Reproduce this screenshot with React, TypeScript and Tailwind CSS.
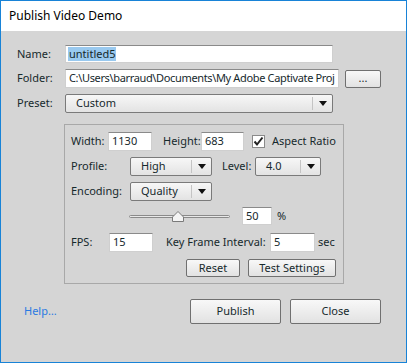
import React from 'react';

const font = { fontFamily: '"Noto Sans", "Liberation Sans", sans-serif' };

function Field({ w, h = 19, value, children }: { w: string; h?: number; value?: string; children?: React.ReactNode }) {
  return (
    <div
      className={`${w} ${h === 18 ? 'h-[18px]' : 'h-[19px]'} bg-white border border-[#cfcfcf] border-t-[#8a8a8a] flex items-center pl-[3px] text-[11px] text-[#16292c] overflow-hidden whitespace-nowrap`}
    >
      {children ?? value}
    </div>
  );
}

function Select({ w, value }: { w: string; value: string }) {
  return (
    <div
      className={`${w} h-[19px] rounded-[2px] border border-[#7a7a7a] bg-gradient-to-b from-[#f7f7f7] to-[#e3e3e3] flex items-center text-[11px] text-[#16292c]`}
    >
      <span className="flex-1 pl-[10px]">{value}</span>
      <span className="w-px h-[13px] bg-[#c4c4c4]" />
      <span className="w-[19px] flex justify-center">
        <svg width="8" height="5" viewBox="0 0 8 5">
          <path d="M0 0H8L4 5Z" fill="#111" />
        </svg>
      </span>
    </div>
  );
}

function Btn({ w, h, label }: { w: string; h: string; label: string }) {
  return (
    <div
      className={`${w} ${h} rounded-[2px] border border-[#707070] bg-gradient-to-b from-[#f8f8f8] to-[#e2e2e2] flex items-center justify-center text-[11px] text-[#16292c]`}
    >
      {label}
    </div>
  );
}

export default function App() {
  return (
    <div
      className="w-[407px] h-[363px] border border-[#1883d7] bg-[#d5d5d5] flex flex-col text-[#16292c]"
      style={font}
    >
      {/* title bar */}
      <div className="h-[30px] bg-white flex items-center pl-[8px] text-[12px] text-black">
        Publish Video Demo
      </div>

      <div className="pl-[16px] flex flex-col text-[11px] whitespace-nowrap">
        <div className="mt-[14px] flex items-center h-[18px]">
          <span className="w-[48px]">Name:</span>
          <Field w="w-[268px]" h={18}>
            <span className="bg-[#99c9ef] px-px -ml-px leading-[14px]">untitled5</span>
          </Field>
        </div>
        <div className="mt-[6px] flex items-center h-[19px]">
          <span className="w-[48px]">Folder:</span>
          <Field w="w-[274px]">
            <span className="tracking-[-0.35px]">C:\Users\barraud\Documents\My Adobe Captivate Proj</span>
          </Field>
          <div className="ml-[6px]">
            <Btn w="w-[36px]" h="h-[18px]" label="..." />
          </div>
        </div>
        <div className="mt-[6px] flex items-center h-[19px]">
          <span className="w-[48px]">Preset:</span>
          <Select w="w-[268px]" value="Custom" />
        </div>

        {/* settings box */}
        <div className="mt-[11px] ml-[47px] w-[280px] h-[160px] border border-[#a8a8a8] pl-[6px] pt-[7px] flex flex-col">
          <div className="flex items-center h-[19px]">
            <span className="w-[37px]">Width:</span>
            <Field w="w-[44px]" value="1130" />
            <span className="ml-[11px] w-[38px]">Height:</span>
            <Field w="w-[43px]" value="683" />
            <span className="ml-[8px] w-[13px] h-[13px] bg-white border border-[#8a8a8a] flex items-center justify-center">
              <svg width="11" height="11" viewBox="0 0 11 11">
                <path d="M1.5 5.5L4 8.5L9.5 1.5" fill="none" stroke="#222" strokeWidth="2" />
              </svg>
            </span>
            <span className="ml-[7px]">Aspect Ratio</span>
          </div>
          <div className="mt-[6px] flex items-center h-[19px]">
            <span className="w-[59px]">Profile:</span>
            <Select w="w-[82px]" value="High" />
            <span className="ml-[10px] w-[33px]">Level:</span>
            <Select w="w-[66px]" value="4.0" />
          </div>
          <div className="mt-[6px] flex items-center h-[19px]">
            <span className="w-[59px]">Encoding:</span>
            <Select w="w-[82px]" value="Quality" />
          </div>
          <div className="mt-[6px] flex items-center h-[18px]">
            <div className="ml-[58px] w-[101px] relative h-[18px] flex items-center">
              <div className="w-full h-[3px] rounded-full border border-[#8a8a8a] bg-[#e8e8e8]" />
              <svg className="absolute left-[43px] top-[4px]" width="12" height="11" viewBox="0 0 12 11">
                <path d="M6 0.5L11.5 6V10.5H0.5V6Z" fill="#f4f4f4" stroke="#7a7a7a" />
              </svg>
            </div>
            <div className="ml-[12px]">
              <Field w="w-[30px]" h={18} value="50" />
            </div>
            <span className="ml-[5px]">%</span>
          </div>
          <div className="mt-[8px] flex items-center h-[19px]">
            <span className="w-[38px]">FPS:</span>
            <Field w="w-[44px]" value="15" />
            <span className="ml-[13px] w-[104px]">Key Frame Interval:</span>
            <Field w="w-[45px]" value="5" />
            <span className="ml-[3px]">sec</span>
          </div>
          <div className="mt-[7px] flex items-center h-[18px] pl-[115px] gap-[8px]">
            <Btn w="w-[54px]" h="h-[18px]" label="Reset" />
            <Btn w="w-[88px]" h="h-[18px]" label="Test Settings" />
          </div>
        </div>

        <div className="mt-[15px] flex items-center h-[25px]">
          <span className="ml-[7px] text-[#2a7ae2]">Help…</span>
          <div className="ml-auto mr-[25px] flex gap-[9px]">
            <Btn w="w-[91px]" h="h-[25px]" label="Publish" />
            <Btn w="w-[91px]" h="h-[25px]" label="Close" />
          </div>
        </div>
      </div>
    </div>
  );
}
